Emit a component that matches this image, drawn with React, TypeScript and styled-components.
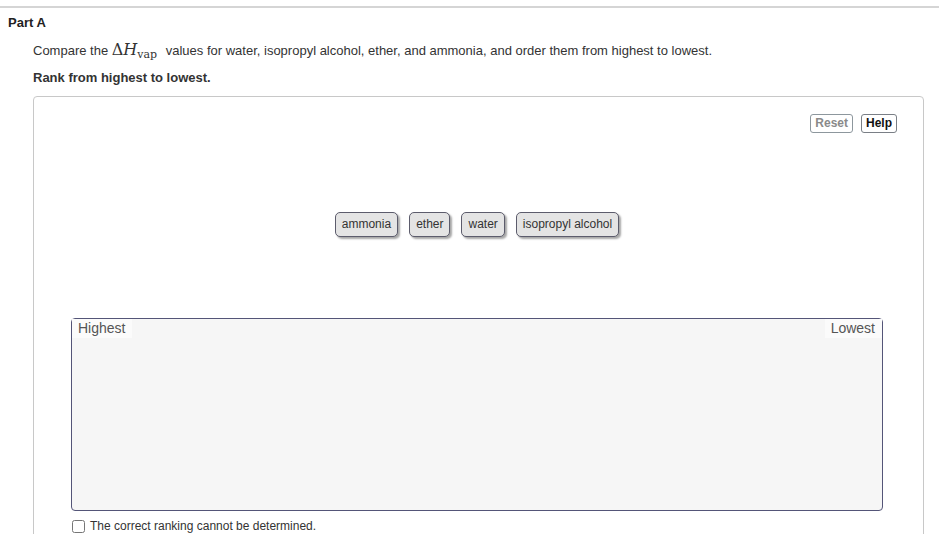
import React from "react";
import styled, { createGlobalStyle } from "styled-components";

const GlobalStyle = createGlobalStyle`
  body {
    margin: 0;
    font-family: "Liberation Sans", Arial, sans-serif;
    color: #333;
    background: #fff;
  }
`;

const items = ["ammonia", "ether", "water", "isopropyl alcohol"];

const App: React.FC = () => {
  return (
    <>
      <GlobalStyle />
      <StyledPage>
        <StyledRule />
        <StyledTitle>Part A</StyledTitle>
        <StyledBody>
          <StyledQuestion>
            Compare the <StyledMath>&Delta;<i>H</i></StyledMath>
            <StyledSub>vap</StyledSub> values for water, isopropyl alcohol,
            ether, and ammonia, and order them from highest to lowest.
          </StyledQuestion>
          <StyledInstruction>Rank from highest to lowest.</StyledInstruction>
          <StyledPanel>
            <StyledToolbar>
              <StyledToolButton disabled>Reset</StyledToolButton>
              <StyledToolButton>Help</StyledToolButton>
            </StyledToolbar>
            <StyledPool>
              {items.map((item) => (
                <StyledChip key={item}>{item}</StyledChip>
              ))}
            </StyledPool>
            <StyledTarget>
              <StyledEndLabel>Highest</StyledEndLabel>
              <StyledEndLabel>Lowest</StyledEndLabel>
            </StyledTarget>
            <StyledCheckRow>
              <StyledCheckbox type="checkbox" />
              The correct ranking cannot be determined.
            </StyledCheckRow>
          </StyledPanel>
        </StyledBody>
      </StyledPage>
    </>
  );
};

export default App;

const StyledPage = styled.div`
  padding-top: 6px;
  height: 534px;
  overflow: hidden;
`;

const StyledRule = styled.div`
  height: 2px;
  background: #d5d5d5;
`;

const StyledTitle = styled.h2`
  margin: 7px 0 0 8px;
  font-size: 13px;
  font-weight: 700;
  color: #222;
  line-height: 16px;
`;

const StyledBody = styled.div`
  padding: 0 15px 0 33px;
`;

const StyledQuestion = styled.p`
  margin: 10px 0 0;
  font-size: 13px;
  line-height: 20px;
  color: #333;
`;

const StyledMath = styled.span`
  font-family: "DejaVu Serif", "Liberation Serif", serif;
  font-size: 16px;
  line-height: 0;

  i {
    font-style: italic;
  }
`;

const StyledSub = styled.sub`
  font-family: "DejaVu Serif", "Liberation Serif", serif;
  font-size: 11px;
  line-height: 0;
  vertical-align: -3px;
  margin-right: 5px;
`;

const StyledInstruction = styled.p`
  margin: 9px 0 0;
  font-size: 13px;
  font-weight: 700;
  line-height: 16px;
  color: #333;
`;

const StyledPanel = styled.div`
  margin-top: 10px;
  border: 1px solid #c8c8c8;
  border-radius: 4px;
  padding: 17px 40px 40px 37px;
  display: flex;
  flex-direction: column;
  min-height: 500px;
`;

const StyledToolbar = styled.div`
  display: flex;
  justify-content: flex-end;
  gap: 8px;
  margin-right: -14px;
`;

const StyledToolButton = styled.button`
  font-family: "Liberation Sans", Arial, sans-serif;
  font-size: 12px;
  font-weight: 700;
  line-height: 15px;
  padding: 1px 4px;
  background: #fff;
  color: #111;
  border: 1px solid #7a7f86;
  border-radius: 3px;

  &:disabled {
    color: #8a8a8a;
    border-color: #8d979d;
  }
`;

const StyledPool = styled.div`
  margin-top: 79px;
  display: flex;
  justify-content: center;
  gap: 11px;
`;

const StyledChip = styled.div`
  font-size: 12px;
  line-height: 15px;
  color: #333;
  padding: 4px 6px;
  background: #e4e4e4;
  border: 1px solid #5c5c6c;
  border-radius: 5px;
  box-shadow: 2px 2px 2px rgba(0, 0, 0, 0.35);
`;

const StyledTarget = styled.div`
  margin-top: 81px;
  height: 191px;
  background: #f6f6f6;
  border: 1px solid #545578;
  border-radius: 4px;
  display: flex;
  justify-content: space-between;
  align-items: flex-start;
`;

const StyledEndLabel = styled.div`
  font-size: 14px;
  line-height: 19px;
  color: #555;
  background: #fbfbfb;
  padding: 0 7px 0 6px;
`;

const StyledCheckRow = styled.label`
  margin-top: 8px;
  display: flex;
  align-items: center;
  gap: 5px;
  font-size: 12px;
  line-height: 14px;
  color: #333;
`;

const StyledCheckbox = styled.input`
  margin: 0 0 0 1px;
  width: 13px;
  height: 13px;
`;
